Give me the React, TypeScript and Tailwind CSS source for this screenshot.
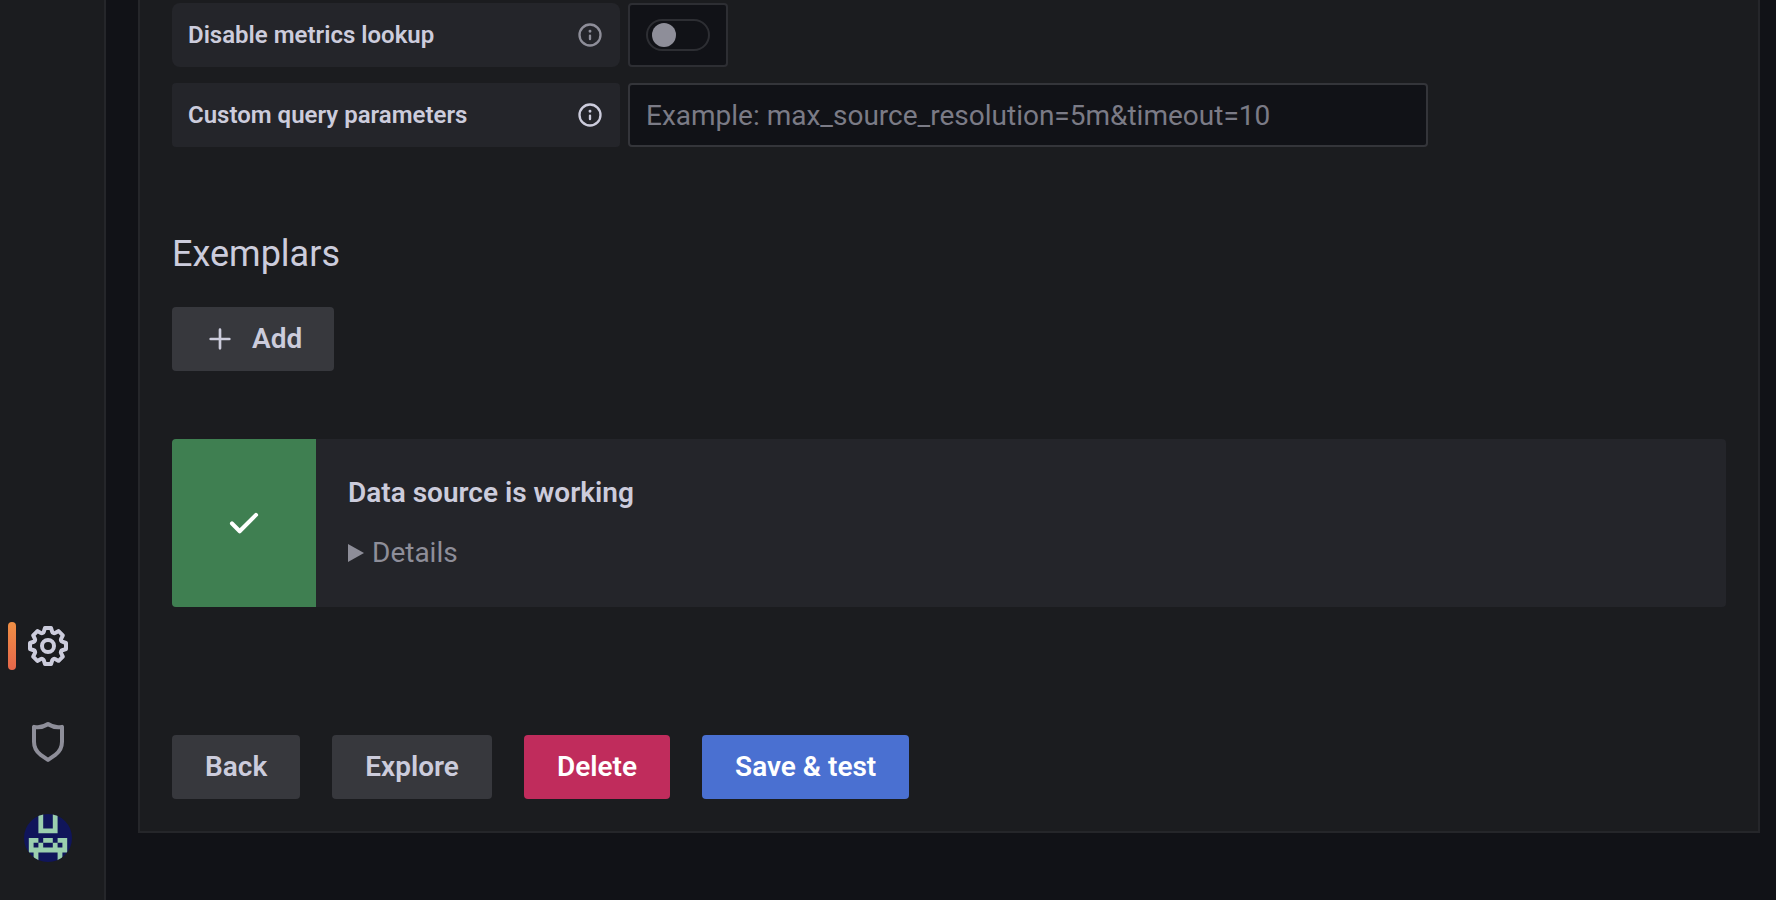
const icons = {
    cog: "M21.32,9.55l-1.89-.63.89-1.78A1,1,0,0,0,20.13,6L18,3.87a1,1,0,0,0-1.15-.19l-1.78.89-.63-1.89A1,1,0,0,0,13.5,2h-3a1,1,0,0,0-.95.68L8.92,4.57,7.14,3.68A1,1,0,0,0,6,3.87L3.87,6a1,1,0,0,0-.19,1.15l.89,1.78-1.89.63A1,1,0,0,0,2,10.5v3a1,1,0,0,0,.68.95l1.89.63-.89,1.78A1,1,0,0,0,3.87,18L6,20.13a1,1,0,0,0,1.15.19l1.78-.89.63,1.89a1,1,0,0,0,.95.68h3a1,1,0,0,0,.95-.68l.63-1.89,1.78.89A1,1,0,0,0,18,20.13L20.13,18a1,1,0,0,0,.19-1.15l-.89-1.78,1.89-.63A1,1,0,0,0,22,13.5v-3A1,1,0,0,0,21.32,9.55ZM20,12.78l-1.2.4A2,2,0,0,0,17.64,16l.57,1.14-1.1,1.1L16,17.64a2,2,0,0,0-2.79,1.16l-.4,1.2H11.22l-.4-1.2A2,2,0,0,0,8,17.64l-1.14.57-1.1-1.1L6.36,16A2,2,0,0,0,5.2,13.18L4,12.78V11.22l1.2-.4A2,2,0,0,0,6.36,8L5.79,6.89l1.1-1.1L8,6.36A2,2,0,0,0,10.82,5.2l.4-1.2h1.56l.4,1.2A2,2,0,0,0,16,6.36l1.14-.57,1.1,1.1L17.64,8a2,2,0,0,0,1.16,2.79l1.2.4ZM12,8a4,4,0,1,0,4,4A4,4,0,0,0,12,8Zm0,6a2,2,0,1,1,2-2A2,2,0,0,1,12,14Z",
    shield: "M19.63,3.65a1,1,0,0,0-.84-.2,8,8,0,0,1-6.22-1.27,1,1,0,0,0-1.14,0A8,8,0,0,1,5.21,3.45a1,1,0,0,0-.84.2A1,1,0,0,0,4,4.43v7.45a9,9,0,0,0,3.77,7.33l3.65,2.6a1,1,0,0,0,1.16,0l3.65-2.6A9,9,0,0,0,20,11.88V4.43A1,1,0,0,0,19.63,3.65ZM18,11.88a7,7,0,0,1-2.93,5.7L12,19.77,8.93,17.58A7,7,0,0,1,6,11.88V5.58a10,10,0,0,0,6-1.39,10,10,0,0,0,6,1.39Z",
    info: "M12,2A10,10,0,1,0,22,12,10,10,0,0,0,12,2Zm0,18a8,8,0,1,1,8-8A8,8,0,0,1,12,20Zm0-8.5a1,1,0,0,0-1,1v3a1,1,0,0,0,2,0v-3A1,1,0,0,0,12,11.5Zm0-4a1.25,1.25,0,1,0,1.25,1.25A1.25,1.25,0,0,0,12,7.5Z",
    check: "M18.71,7.21a1,1,0,0,0-1.42,0L9.84,14.67,6.71,11.53A1,1,0,1,0,5.29,13l3.84,3.84a1,1,0,0,0,1.42,0l8.16-8.16A1,1,0,0,0,18.71,7.21Z",
    plus: "M19,11H13V5a1,1,0,0,0-2,0v6H5a1,1,0,0,0,0,2h6v6a1,1,0,0,0,2,0V13h6a1,1,0,0,0,0-2Z",
};

function Icon({ name, className }: { name: keyof typeof icons; className: string }) {
    return (
        <svg viewBox="0 0 24 24" fill="currentColor" aria-hidden="true" className={className}>
            <path d={icons[name]} />
        </svg>
    );
}

// identicon on a 10x10 grid, clipped to a circle
function Avatar() {
    return (
        <svg viewBox="0 0 10 10" aria-hidden="true" className="size-12 rounded-full bg-[#10155a]">
            <path
                fill="#9bcfae"
                fillRule="evenodd"
                d="M3 0H4V3H6V0H7V4H3ZM1 5H3V6H4V5H6V6H7V5H9V8H8V10H7V8H3V10H2V8H1ZM2 6V7H3V6ZM4 6V7H6V6ZM7 6V7H8V6Z"
            />
        </svg>
    );
}

function Sidebar() {
    return (
        <nav className="flex w-[106px] flex-none flex-col justify-end gap-12 border-r-2 border-[#25262a] bg-[#1b1c1f] pb-[38px]">
            <a href="#configuration" aria-label="Configuration" className="flex items-center gap-2 pl-2 text-[#ccccdc]">
                <span className="h-12 w-2 rounded-sm bg-linear-to-b from-[#f08f45] to-[#e5664a]" />
                <Icon name="cog" className="size-12" />
            </a>
            <a href="#admin" aria-label="Server admin" className="pl-6 text-[#8e8e99]">
                <Icon name="shield" className="size-12" />
            </a>
            <a href="#profile" aria-label="Profile" className="pl-6">
                <Avatar />
            </a>
        </nav>
    );
}

export default function App() {
    return (
        <div className="flex min-h-screen bg-[#111217] font-[Roboto,sans-serif] text-[28px] leading-10 text-[#ccccdc]">
            <Sidebar />
            <main className="min-w-0 flex-1 pr-4 pl-8">
                <div className="border-2 border-t-0 border-[#25262a] bg-[#1b1c1f] px-8 pt-[3px] pb-8">
                    <form className="flex flex-col gap-4">
                        <div className="flex gap-2">
                            <div className="flex h-16 w-[448px] flex-none items-center justify-between rounded-lg bg-[#24252a] px-4 text-2xl font-semibold">
                                <label htmlFor="disableLookup">Disable metrics lookup</label>
                                <Icon name="info" className="size-7 text-[#8e8e99]" />
                            </div>
                            <div className="flex h-16 items-center rounded-sm border-2 border-[#2d2e33] bg-[#111217] px-4">
                                <input
                                    id="disableLookup"
                                    type="checkbox"
                                    className="flex h-8 w-16 appearance-none items-center rounded-full border-2 border-[#2d2e33] px-1 before:size-6 before:rounded-full before:bg-[#8e8e99] checked:justify-end"
                                />
                            </div>
                        </div>
                        <div className="flex gap-2">
                            <div className="flex h-16 w-[448px] flex-none items-center justify-between rounded-sm bg-[#24252a] px-4 text-2xl font-semibold">
                                <label htmlFor="queryParams">Custom query parameters</label>
                                <Icon name="info" className="size-7" />
                            </div>
                            <input
                                id="queryParams"
                                type="text"
                                placeholder="Example: max_source_resolution=5m&timeout=10"
                                className="h-16 w-full max-w-[800px] rounded-sm border-2 border-[#34353a] bg-[#111217] px-4 placeholder:text-[#7b7b86]"
                            />
                        </div>
                    </form>

                    <h3 className="mt-20 text-4xl leading-[54px]">Exemplars</h3>
                    <button type="button" className="mt-[26px] flex h-16 items-center gap-4 rounded-sm bg-[#37383d] px-8 font-semibold">
                        <Icon name="plus" className="size-8" />
                        Add
                    </button>

                    <div className="mt-[68px] flex overflow-hidden rounded-sm bg-[#24252a]">
                        <div className="flex w-36 flex-none items-center justify-center bg-[#3f7f51] text-white">
                            <Icon name="check" className="size-12" />
                        </div>
                        <div className="flex flex-col gap-5 px-8 py-[34px]">
                            <div className="font-semibold">Data source is working</div>
                            <details className="group text-[#8e8e99]">
                                <summary className="flex list-none items-center gap-2">
                                    <svg viewBox="0 0 16 18" fill="currentColor" aria-hidden="true" className="w-4 group-open:rotate-90">
                                        <path d="M0 0 16 9 0 18Z" />
                                    </svg>
                                    Details
                                </summary>
                            </details>
                        </div>
                    </div>

                    <div className="mt-32 flex gap-8 font-semibold">
                        <button type="button" className="h-16 rounded-sm bg-[#37383d] px-[33px]">Back</button>
                        <button type="button" className="h-16 rounded-sm bg-[#37383d] px-[33px]">Explore</button>
                        <button type="button" className="h-16 rounded-sm bg-[#c02c5c] px-[33px] text-white">Delete</button>
                        <button type="submit" className="h-16 rounded-sm bg-[#4a70d1] px-[33px] text-white">Save &amp; test</button>
                    </div>
                </div>
            </main>
        </div>
    );
}
